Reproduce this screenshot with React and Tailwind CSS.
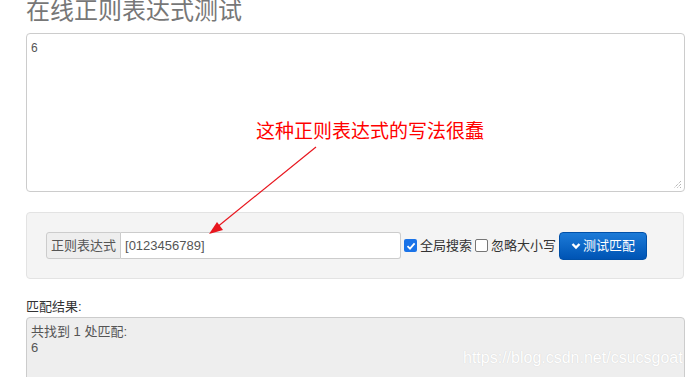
import React from "react";

export default function App() {
  const font = { fontFamily: '"Liberation Sans", Arial, "Noto Sans CJK SC", sans-serif' };
  return (
    <div className="relative w-[691px] h-[377px] overflow-hidden bg-white text-[13px] text-[#333]" style={font}>
      <div className="pl-[26px] pr-[6px]">
        <div className="h-[37px] -mt-[4px] text-[24px] leading-[30px] text-[#777]">在线正则表达式测试</div>
        <div className="relative h-[159px] w-[659px] rounded-[4px] border border-[#ccc] bg-white px-[4px] pt-[6px] text-[12px] leading-[16px] text-[#555]">
          6
          <svg className="absolute bottom-[2px] right-[2px]" width="9" height="9" viewBox="0 0 9 9">
            <path d="M8 1L1 8M8 4L4 8M8 7L7 8" stroke="#999" strokeWidth="1" strokeDasharray="1 1" />
          </svg>
        </div>
        <div className="mt-[20px] w-[658px] rounded-[4px] border border-[#e3e3e3] bg-[#f4f4f4] px-[19px] py-[19px]">
          <div className="flex items-center h-[27px]">
            <div className="flex h-[27px] items-center rounded-l-[3px] border border-[#ccc] bg-[#eee] px-[4px] text-[#555]">正则表达式</div>
            <div className="flex h-[27px] w-[280px] items-center rounded-r-[3px] border border-l-0 border-[#ccc] bg-white px-[4px] text-[#555]">[0123456789]</div>
            <div className="ml-[3px] flex h-[13px] w-[13px] items-center justify-center rounded-[2px] bg-[#1a73e8]">
              <svg width="10" height="10" viewBox="0 0 10 10"><path d="M1.5 5.2L4 7.6L8.6 2.4" fill="none" stroke="white" strokeWidth="1.8" /></svg>
            </div>
            <span className="ml-[3px] text-[#333]">全局搜索</span>
            <div className="ml-[3px] h-[13px] w-[13px] rounded-[2px] border border-[#767676] bg-white"></div>
            <span className="ml-[3px] text-[#333]">忽略大小写</span>
            <button className="ml-[3px] flex h-[28px] w-[88px] items-center justify-center gap-[2px] rounded-[4px] border border-[#0050a8] bg-gradient-to-b from-[#1c7bd8] to-[#0054b4] text-[13px] text-white">
              <svg width="10" height="8" viewBox="0 0 10 8"><path d="M1.5 2L5 5.5L8.5 2" fill="none" stroke="white" strokeWidth="2.4" /></svg>
              测试匹配
            </button>
          </div>
        </div>
        <div className="mt-[19px] leading-[17px] text-[#333]">匹配结果:</div>
        <div className="mt-[2px] h-[80px] w-[659px] rounded-[4px] border border-[#ccc] bg-[#eee] px-[4px] pt-[6px] text-[13px] leading-[16px] text-[#555]">
          <div>共找到 1 处匹配:</div>
          <div>6</div>
        </div>
      </div>
      <div className="absolute left-[256px] top-[120px] text-[19px] leading-[24px] text-[#ff0000]">这种正则表达式的写法很蠢</div>
      <svg className="absolute left-0 top-0" width="691" height="377" viewBox="0 0 691 377">
        <line x1="316" y1="147" x2="216" y2="228" stroke="#e8161e" strokeWidth="1.2" />
        <path d="M209 234L217 222L223 230Z" fill="#e8161e" />
      </svg>
      <div className="absolute left-[463px] top-[349px] text-[16px] leading-[18px] text-white" style={{ textShadow: "0 0 1px #ccc" }}>https://blog.csdn.net/csucsgoat</div>
    </div>
  );
}
